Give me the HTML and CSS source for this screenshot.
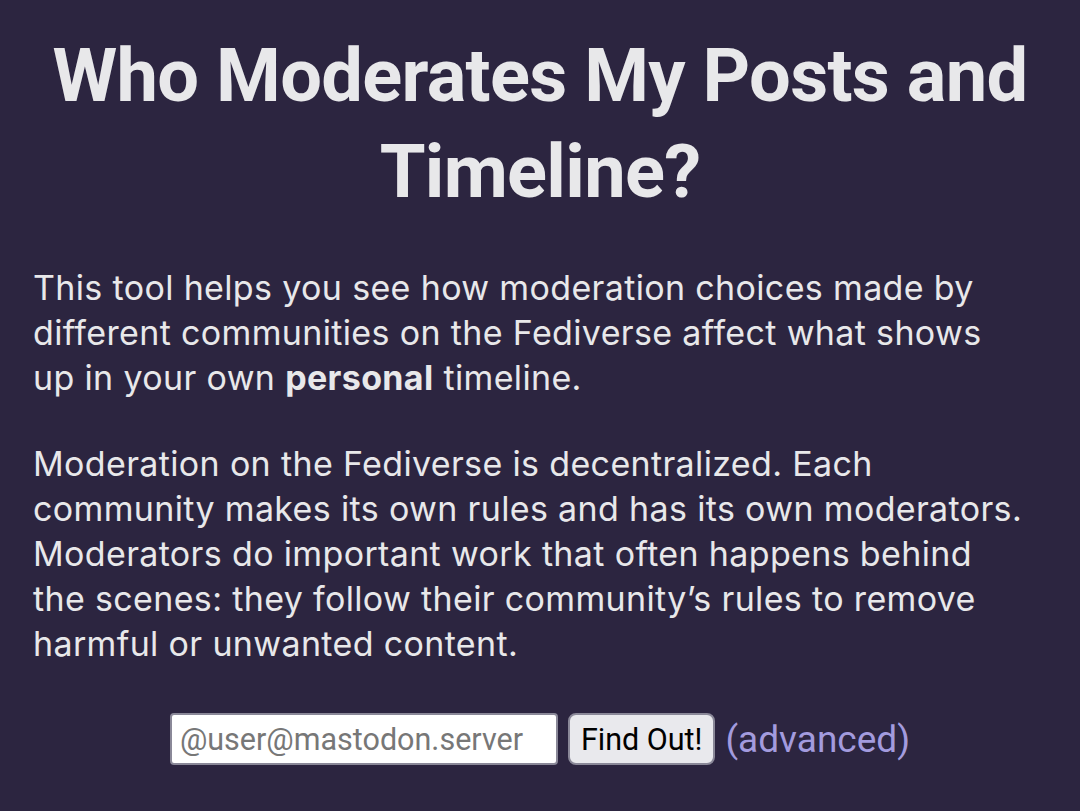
FILE: index.html
```html
<!DOCTYPE html>
<html lang="en">
<head>
<meta charset="utf-8">
<title>Who Moderates My Posts and Timeline?</title>
<link rel="stylesheet" href="styles.css">
</head>
<body>
<main class="page">
  <h1 class="title">Who Moderates My Posts and Timeline?</h1>
  <p class="lead">This tool helps you see how moderation choices made by different communities on the Fediverse affect what shows up in your own <strong>personal</strong> timeline.</p>
  <p class="lead">Moderation on the Fediverse is decentralized. Each community makes its own rules and has its own moderators. Moderators do important work that often happens behind the scenes: they follow their community’s rules to remove harmful or unwanted content.</p>
  <form class="lookup">
    <input class="handle" type="text" placeholder="@user@mastodon.server">
    <button class="go" type="button">Find Out!</button>
    <a class="adv" href="#">(advanced)</a>
  </form>
</main>
</body>
</html>
```

FILE: styles.css
```css
html, body {
  margin: 0;
  padding: 0;
  background: #2c2540;
}
.page {
  padding: 28px 33px 0 33px;
  color: #e8e8ea;
  font-family: "Inter", "Noto Sans", sans-serif;
}
.title {
  margin: 0;
  text-align: center;
  font-family: "Roboto", "Liberation Sans", sans-serif;
  font-weight: 700;
  font-size: 74px;
  line-height: 96px;
  letter-spacing: -0.7px;
  color: #e8e8ea;
}
.lead {
  margin: 45px 21px 0 0;
  font-size: 34px;
  line-height: 45px;
  letter-spacing: 0.35px;
  font-weight: 400;
}
.lead + .lead {
  margin-top: 41px;
}
.lead strong {
  font-weight: 700;
}
.lookup {
  display: flex;
  justify-content: center;
  align-items: center;
  gap: 10px;
  margin-top: 47px;
}
.handle {
  box-sizing: border-box;
  width: 388px;
  height: 52px;
  padding: 0 8px;
  border: 2px solid #8a8898;
  border-radius: 4px;
  background: #ffffff;
  font-family: "Roboto", sans-serif;
  font-size: 30.5px;
  color: #222;
}
.handle::placeholder {
  color: #777;
}
.go {
  box-sizing: border-box;
  height: 52px;
  padding: 0 11px;
  border: 2px solid #8a8898;
  border-radius: 8px;
  background: #e9e9ed;
  font-family: "Roboto", sans-serif;
  font-size: 30.5px;
  color: #000;
}
.adv {
  font-family: "Roboto", sans-serif;
  font-size: 37px;
  color: #a39bde;
  text-decoration: none;
}
```
